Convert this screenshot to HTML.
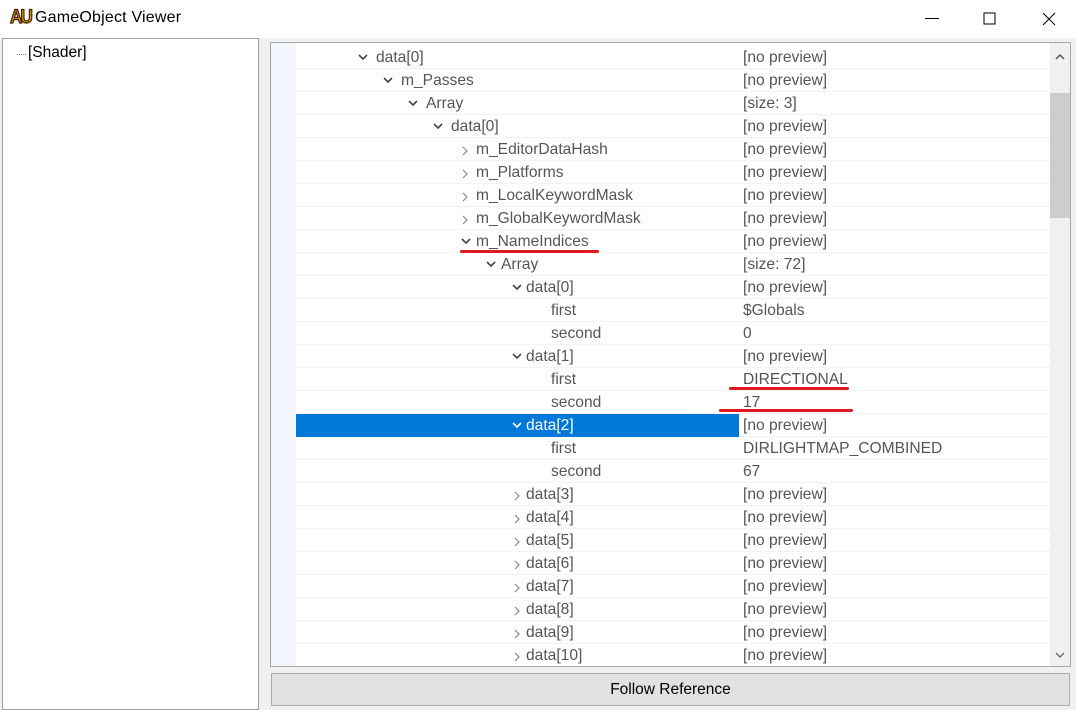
<!DOCTYPE html>
<html><head><meta charset="utf-8"><style>
*{margin:0;padding:0;box-sizing:border-box}
body{width:1076px;height:710px;background:#f0f0f0;font-family:"Segoe UI","Liberation Sans","Noto Sans CJK SC",sans-serif;position:relative;overflow:hidden;color:#555}
.title{position:absolute;left:0;top:0;width:1076px;height:38px;background:#fff}
.title .t{position:absolute;left:35px;top:9px;font-size:16px;color:#000;letter-spacing:0.2px}
.logo{position:absolute;left:10px;top:7px;font:bold 19px "Liberation Sans",sans-serif;color:#e08a00;-webkit-text-stroke:1.2px #3a2000;letter-spacing:-2px;transform:scaleX(0.9);transform-origin:left}
.left{position:absolute;left:2px;top:38px;width:257px;height:672px;background:#fff;border:1px solid #a0a0a0}
.left .s{position:absolute;left:25px;top:5px;font-size:15.5px;color:#000}
.left .dots{position:absolute;left:14px;top:15px;width:9px;border-top:1px dotted #888}
.tree{position:absolute;left:270px;top:42px;width:801px;height:625px;background:#fff;border:1px solid #a8a8a8;overflow:hidden}
.strip{position:absolute;left:0;top:0;width:25px;height:100%;background:#f2f5fc}
.row{position:absolute;left:25px;width:754px;height:23px;border-bottom:1px solid #f3f3f3;font-size:15.6px;line-height:24px}
.row .n{position:absolute;white-space:nowrap}
.row .v{position:absolute;left:447px;white-space:nowrap}
.row svg{position:absolute;top:8px}
.sel .hl{position:absolute;left:0;top:0;width:443px;height:23px;background:#0078d7}
.sel .n{color:#fff}
.sb{position:absolute;left:779px;top:0;width:20px;height:623px;background:#f0f0f0}
.thumb{position:absolute;left:0;top:50px;width:20px;height:125px;background:#cdcdcd}
.btn{position:absolute;left:271px;top:673px;width:799px;height:33px;background:#e1e1e1;border:1px solid #adadad;font-size:15.5px;color:#000;text-align:center;line-height:31px}
.red{position:absolute;height:3px;background:#e0191e;border-radius:2px}
</style></head><body>
<div class="title"><div class="logo">AU</div><div class="t">GameObject Viewer</div>
<svg style="position:absolute;left:925px;top:18px" width="14" height="2"><rect width="14" height="1" fill="#000"/></svg>
<svg style="position:absolute;left:983px;top:12px" width="14" height="14"><rect x="1" y="1" width="11" height="11" fill="none" stroke="#000"/></svg>
<svg style="position:absolute;left:1042px;top:12px" width="14" height="14"><path d="M1 1L13 13M13 1L1 13" stroke="#000"/></svg>
</div>
<div class="left"><div class="dots"></div><div class="s">[Shader]</div></div>
<div class="tree"><div class="strip"></div>
<div id="rows">
<div class="row" style="top:3px"><svg style="left:62px" width="10" height="8"><path d="M1 1L5 5L9 1" stroke="#444" stroke-width="1.6" fill="none"/></svg><span class="n" style="left:80px">data[0]</span><span class="v">[no preview]</span></div>
<div class="row" style="top:26px"><svg style="left:87px" width="10" height="8"><path d="M1 1L5 5L9 1" stroke="#444" stroke-width="1.6" fill="none"/></svg><span class="n" style="left:105px">m_Passes</span><span class="v">[no preview]</span></div>
<div class="row" style="top:49px"><svg style="left:112px" width="10" height="8"><path d="M1 1L5 5L9 1" stroke="#444" stroke-width="1.6" fill="none"/></svg><span class="n" style="left:130px">Array</span><span class="v">[size: 3]</span></div>
<div class="row" style="top:72px"><svg style="left:137px" width="10" height="8"><path d="M1 1L5 5L9 1" stroke="#444" stroke-width="1.6" fill="none"/></svg><span class="n" style="left:155px">data[0]</span><span class="v">[no preview]</span></div>
<div class="row" style="top:95px"><svg style="left:166px;top:8px" width="7" height="10"><path d="M1 1L5 5L1 9" stroke="#888" stroke-width="1.2" fill="none"/></svg><span class="n" style="left:180px">m_EditorDataHash</span><span class="v">[no preview]</span></div>
<div class="row" style="top:118px"><svg style="left:166px;top:8px" width="7" height="10"><path d="M1 1L5 5L1 9" stroke="#888" stroke-width="1.2" fill="none"/></svg><span class="n" style="left:180px">m_Platforms</span><span class="v">[no preview]</span></div>
<div class="row" style="top:141px"><svg style="left:166px;top:8px" width="7" height="10"><path d="M1 1L5 5L1 9" stroke="#888" stroke-width="1.2" fill="none"/></svg><span class="n" style="left:180px">m_LocalKeywordMask</span><span class="v">[no preview]</span></div>
<div class="row" style="top:164px"><svg style="left:166px;top:8px" width="7" height="10"><path d="M1 1L5 5L1 9" stroke="#888" stroke-width="1.2" fill="none"/></svg><span class="n" style="left:180px">m_GlobalKeywordMask</span><span class="v">[no preview]</span></div>
<div class="row" style="top:187px"><svg style="left:165px" width="10" height="8"><path d="M1 1L5 5L9 1" stroke="#444" stroke-width="1.6" fill="none"/></svg><span class="n" style="left:180px">m_NameIndices</span><span class="v">[no preview]</span></div>
<div class="row" style="top:210px"><svg style="left:190px" width="10" height="8"><path d="M1 1L5 5L9 1" stroke="#444" stroke-width="1.6" fill="none"/></svg><span class="n" style="left:205px">Array</span><span class="v">[size: 72]</span></div>
<div class="row" style="top:233px"><svg style="left:216px" width="10" height="8"><path d="M1 1L5 5L9 1" stroke="#444" stroke-width="1.6" fill="none"/></svg><span class="n" style="left:230px">data[0]</span><span class="v">[no preview]</span></div>
<div class="row" style="top:256px"><span class="n" style="left:255px">first</span><span class="v">$Globals</span></div>
<div class="row" style="top:279px"><span class="n" style="left:255px">second</span><span class="v">0</span></div>
<div class="row" style="top:302px"><svg style="left:216px" width="10" height="8"><path d="M1 1L5 5L9 1" stroke="#444" stroke-width="1.6" fill="none"/></svg><span class="n" style="left:230px">data[1]</span><span class="v">[no preview]</span></div>
<div class="row" style="top:325px"><span class="n" style="left:255px">first</span><span class="v">DIRECTIONAL</span></div>
<div class="row" style="top:348px"><span class="n" style="left:255px">second</span><span class="v">17</span></div>
<div class="row sel" style="top:371px"><div class="hl"></div><svg style="left:216px" width="10" height="8"><path d="M1 1L5 5L9 1" stroke="#fff" stroke-width="1.6" fill="none"/></svg><span class="n" style="left:230px">data[2]</span><span class="v">[no preview]</span></div>
<div class="row" style="top:394px"><span class="n" style="left:255px">first</span><span class="v">DIRLIGHTMAP_COMBINED</span></div>
<div class="row" style="top:417px"><span class="n" style="left:255px">second</span><span class="v">67</span></div>
<div class="row" style="top:440px"><svg style="left:218px;top:8px" width="7" height="10"><path d="M1 1L5 5L1 9" stroke="#888" stroke-width="1.2" fill="none"/></svg><span class="n" style="left:230px">data[3]</span><span class="v">[no preview]</span></div>
<div class="row" style="top:463px"><svg style="left:218px;top:8px" width="7" height="10"><path d="M1 1L5 5L1 9" stroke="#888" stroke-width="1.2" fill="none"/></svg><span class="n" style="left:230px">data[4]</span><span class="v">[no preview]</span></div>
<div class="row" style="top:486px"><svg style="left:218px;top:8px" width="7" height="10"><path d="M1 1L5 5L1 9" stroke="#888" stroke-width="1.2" fill="none"/></svg><span class="n" style="left:230px">data[5]</span><span class="v">[no preview]</span></div>
<div class="row" style="top:509px"><svg style="left:218px;top:8px" width="7" height="10"><path d="M1 1L5 5L1 9" stroke="#888" stroke-width="1.2" fill="none"/></svg><span class="n" style="left:230px">data[6]</span><span class="v">[no preview]</span></div>
<div class="row" style="top:532px"><svg style="left:218px;top:8px" width="7" height="10"><path d="M1 1L5 5L1 9" stroke="#888" stroke-width="1.2" fill="none"/></svg><span class="n" style="left:230px">data[7]</span><span class="v">[no preview]</span></div>
<div class="row" style="top:555px"><svg style="left:218px;top:8px" width="7" height="10"><path d="M1 1L5 5L1 9" stroke="#888" stroke-width="1.2" fill="none"/></svg><span class="n" style="left:230px">data[8]</span><span class="v">[no preview]</span></div>
<div class="row" style="top:578px"><svg style="left:218px;top:8px" width="7" height="10"><path d="M1 1L5 5L1 9" stroke="#888" stroke-width="1.2" fill="none"/></svg><span class="n" style="left:230px">data[9]</span><span class="v">[no preview]</span></div>
<div class="row" style="top:601px"><svg style="left:218px;top:8px" width="7" height="10"><path d="M1 1L5 5L1 9" stroke="#888" stroke-width="1.2" fill="none"/></svg><span class="n" style="left:230px">data[10]</span><span class="v">[no preview]</span></div>
</div>
<div class="sb"><svg style="position:absolute;left:5px;top:10px" width="10" height="7"><path d="M1 6L5 2L9 6" stroke="#555" stroke-width="1.5" fill="none"/></svg><div class="thumb"></div><svg style="position:absolute;left:5px;top:609px" width="10" height="7"><path d="M1 1L5 5L9 1" stroke="#555" stroke-width="1.2" fill="none"/></svg></div>
</div>
<div class="red" style="left:460px;top:250px;width:139px"></div>
<div class="red" style="left:729px;top:387px;width:120px"></div>
<div class="red" style="left:719px;top:409px;width:134px"></div>
<div class="btn">Follow Reference</div>
</body></html>
